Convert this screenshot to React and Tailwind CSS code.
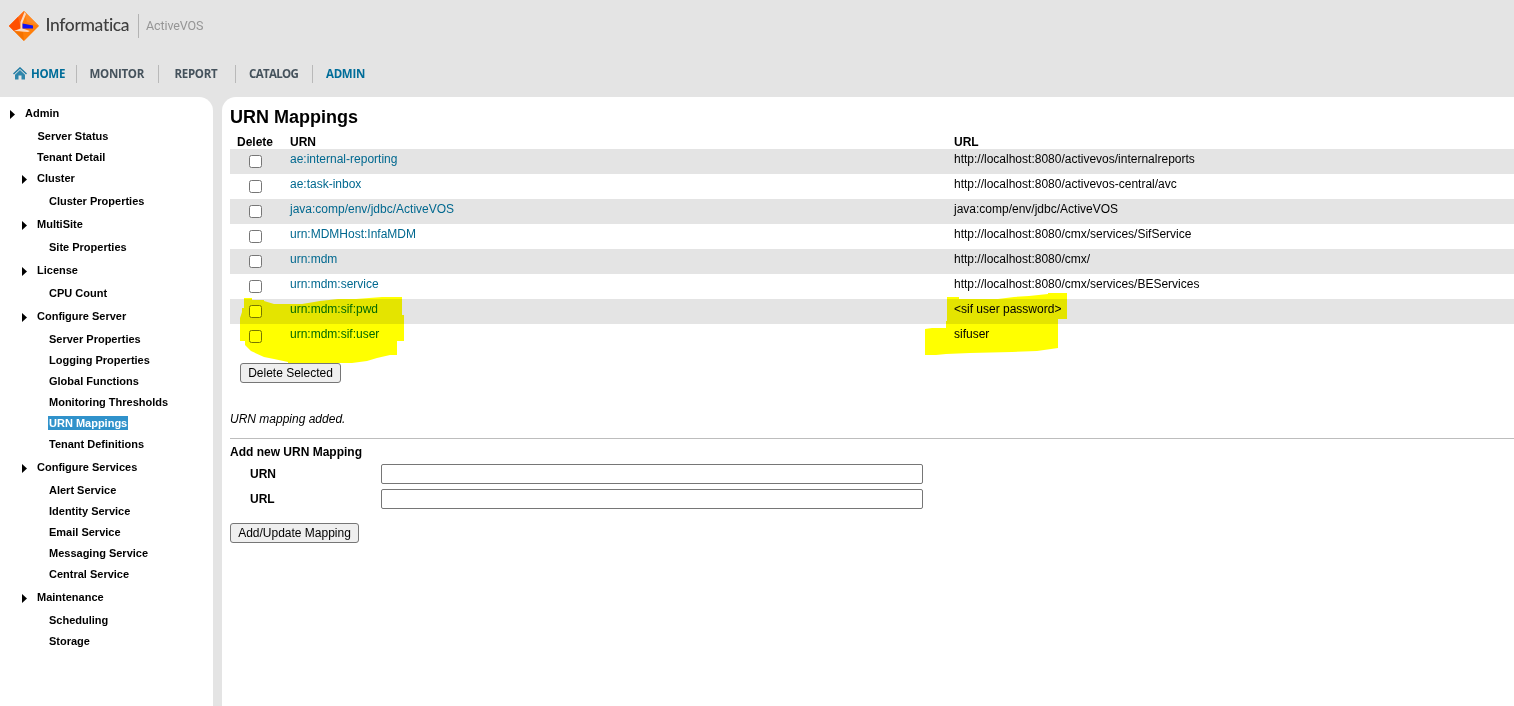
const ADMIN_TREE = [
  {
    label: "Cluster",
    items: ["Cluster Properties"],
  },
  {
    label: "MultiSite",
    items: ["Site Properties"],
  },
  {
    label: "License",
    items: ["CPU Count"],
  },
  {
    label: "Configure Server",
    items: [
      "Server Properties",
      "Logging Properties",
      "Global Functions",
      "Monitoring Thresholds",
      "URN Mappings",
      "Tenant Definitions",
    ],
  },
  {
    label: "Configure Services",
    items: [
      "Alert Service",
      "Identity Service",
      "Email Service",
      "Messaging Service",
      "Central Service",
    ],
  },
  {
    label: "Maintenance",
    items: ["Scheduling", "Storage"],
  },
];

const MAPPINGS = [
  ["ae:internal-reporting", "http://localhost:8080/activevos/internalreports"],
  ["ae:task-inbox", "http://localhost:8080/activevos-central/avc"],
  ["java:comp/env/jdbc/ActiveVOS", "java:comp/env/jdbc/ActiveVOS"],
  ["urn:MDMHost:InfaMDM", "http://localhost:8080/cmx/services/SifService"],
  ["urn:mdm", "http://localhost:8080/cmx/"],
  ["urn:mdm:service", "http://localhost:8080/cmx/services/BEServices"],
  ["urn:mdm:sif:pwd", "<sif user password>"],
  ["urn:mdm:sif:user", "sifuser"],
];

function Logo() {
  return (
    <svg width="32" height="32" viewBox="0 0 32 32" className="shrink-0">
      <path d="M16 1 L31 16 L16 31 L1 16 Z" fill="#ff7f0a" />
      <path d="M16 1 L31 16 L19 12 Z" fill="#ff8a24" />
      <path d="M16 1 L1 16 L6 21 L14 12 Z" fill="#ff6a14" />
      <path d="M1 16 L10 7 L13 19 L6 21 Z" fill="#ff4f00" />
      <path d="M16.5 2 L18 4 L14.5 12.5 V18.5 L22 21 L20 22 L6 21 L12.5 18.5 V12 Z" fill="#fbd9c2" />
      <path d="M6 21 L16 31 L15 22 Z" fill="#f57200" />
      <path d="M14.5 13.5 L25 15.5 V18.5 L14.5 18.5 Z" fill="#1010f5" />
    </svg>
  );
}

function HomeIcon() {
  return (
    <svg width="14" height="13" viewBox="0 0 14 13" className="mb-px mr-1 shrink-0">
      <path d="M0.5 7 L7 0.9 L13.5 7" fill="none" stroke="#1f7ba3" strokeWidth="1.4" />
      <path d="M2 7.8 L7 3.1 L12 7.8 V12.5 H8.5 V8.5 H5.5 V12.5 H2 Z" fill="#2f86ab" />
    </svg>
  );
}

function NavDivider() {
  return <div className="h-[18px] w-px bg-[#b9b9b9]" />;
}

function Arrow() {
  return (
    <svg width="5" height="9" viewBox="0 0 5 9" className="mt-[2px] shrink-0">
      <path d="M0 0 L5 4.5 L0 9 Z" fill="#000" />
    </svg>
  );
}

function Header() {
  return (
    <header className="h-[97px]">
      <div className="flex h-[52px] items-center pl-2">
        <Logo />
        <span className="mb-[3px] ml-[5.5px] w-[84.5px] font-[Lato] text-[17.5px] leading-5 font-medium tracking-[-0.35px] text-[#3f3f3f]">
          Informatica
        </span>
        <div className="ml-2 h-6 w-px bg-[#b3b3b3]" />
        <span className="ml-[7px] font-[Roboto] text-[12.5px] tracking-[-0.1px] text-[#959595]">ActiveVOS</span>
      </div>
      <nav className="flex h-11 items-center pl-[13px] font-['Open_Sans'] text-[11.5px] font-bold tracking-[-0.3px] text-[#45525c]">
        <a className="flex w-[63px] items-center text-[#006d99]">
          <HomeIcon />
          HOME
        </a>
        <NavDivider />
        <a className="w-[81px] pl-[12.5px]">MONITOR</a>
        <NavDivider />
        <a className="w-[76px] pl-[15.5px]">REPORT</a>
        <NavDivider />
        <a className="w-[76px] pl-[13px] tracking-[-0.65px]">CATALOG</a>
        <NavDivider />
        <a className="pl-[13px] text-[#006d99]">ADMIN</a>
      </nav>
    </header>
  );
}

function Sidebar() {
  return (
    <aside className="w-[213px] shrink-0 rounded-tr-[14px] bg-white pt-[6px] text-[11px] font-bold">
      <div className="mb-[2px] flex h-[21px] items-center pl-[10px]">
        <Arrow />
        <span className="ml-[10px]">Admin</span>
      </div>
      <div className="flex h-[21px] items-center pl-[37.5px]">Server Status</div>
      <div className="flex h-[21px] items-center pl-[37px]">Tenant Detail</div>
      {ADMIN_TREE.map((group) => (
        <div key={group.label} className="mb-[2px]">
          <div className="mb-[2px] flex h-[21px] items-center pl-[22px]">
            <Arrow />
            <span className="ml-[10px]">{group.label}</span>
          </div>
          {group.items.map((item) => (
            <div key={item} className="flex h-[21px] items-center pl-12">
              <span
                className={
                  item === "URN Mappings"
                    ? "mb-px h-[14px] bg-[#3092cb] px-px leading-[14px] text-white"
                    : "px-px"
                }
              >
                {item}
              </span>
            </div>
          ))}
        </div>
      ))}
    </aside>
  );
}

function MappingTable() {
  return (
    <div className="relative">
      <div className="flex h-[17px] items-center pt-[2px] font-bold">
        <div className="w-[60px] pl-[7px]">Delete</div>
        <div className="w-[664px]">URN</div>
        <div>URL</div>
      </div>
      {MAPPINGS.map(([urn, url]) => (
        <div key={urn} className="flex h-[25px] odd:bg-white even:bg-[#e4e4e4]">
          <div className="w-[60px] pt-[6px] pl-[19px]">
            <input
              type="checkbox"
              className="block size-[13px] appearance-none rounded-[2.5px] border border-[#767676] bg-white"
            />
          </div>
          <a className="w-[664px] pt-[2px] leading-4 text-[#00688f]">{urn}</a>
          <div className="pt-[2px] leading-4">{url}</div>
        </div>
      ))}
      {/* marker strokes over the sif rows */}
      <svg
        width="200"
        height="80"
        viewBox="0 0 200 80"
        className="pointer-events-none absolute top-[160px] left-0 mix-blend-multiply"
      >
        <path
          d="M14 6 H22 V8 H34 V9 L44 12 H72 L90 9 L108 7 H126 L152 5 H172 V23 H174 V49 H167 V63 H160 L147 66 L137 69 L122 71 H58 V70 L44 67 L34 65 L21 59 L15 53 V49 H10 V26 L12 20 V16 H14 Z"
          fill="#ff0"
        />
      </svg>
      <svg
        width="150"
        height="70"
        viewBox="0 0 150 70"
        className="pointer-events-none absolute top-[160px] left-[692px] mix-blend-multiply"
      >
        <path
          d="M25 5 H37 V7 H76 L92 5 L107 4 L126 2 V1 H145 V27 H136 V56 L115 59 L90 60 L48 61 L24 62 L14 63 H3 V37 L10 36 H24 V29 H25 Z"
          fill="#ff0"
        />
      </svg>
    </div>
  );
}

function AddMappingForm() {
  return (
    <form>
      <div className="flex h-[25px] items-center font-bold">Add new URN Mapping</div>
      {["URN", "URL"].map((field) => (
        <label key={field} className="mb-[5px] flex h-5 items-center font-bold">
          <span className="w-[151px] pl-5">{field}</span>
          <input type="text" className="h-5 w-[542px] rounded-[2px] border border-[#767676] bg-white" />
        </label>
      ))}
      <button
        type="button"
        className="mt-[14px] block h-5 w-[129px] rounded-[3px] border border-[#767676] bg-[#efefef] leading-[18px]"
      >
        Add/Update Mapping
      </button>
    </form>
  );
}

export default function App() {
  return (
    <div className="flex h-[706px] w-[1514px] flex-col overflow-hidden bg-[#e4e4e4] font-['Liberation_Sans',Arial,sans-serif] text-xs text-black">
      <Header />
      <div className="flex flex-1">
        <Sidebar />
        <main className="ml-[9px] flex-1 rounded-tl-[14px] bg-white pl-2">
          <h1 className="h-[35px] pt-[10px] text-[18px] leading-5 font-bold">URN Mappings</h1>
          <MappingTable />
          <button
            type="button"
            className="mt-[14px] ml-[10px] block h-5 w-[101px] rounded-[3px] border border-[#767676] bg-[#efefef] leading-[18px]"
          >
            Delete Selected
          </button>
          <p className="mt-7 h-[27px] leading-4 italic">URN mapping added.</p>
          <div className="h-px bg-[#bdbdbd]" />
          <AddMappingForm />
        </main>
      </div>
    </div>
  );
}
